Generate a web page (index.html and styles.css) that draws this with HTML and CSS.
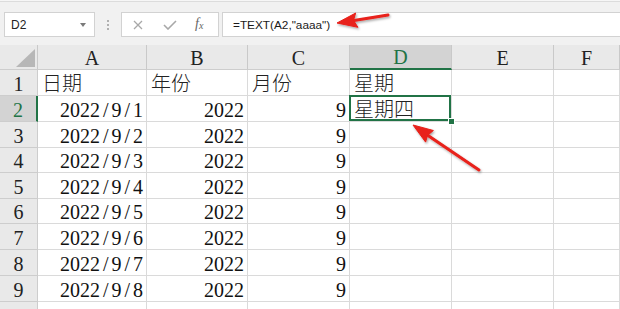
FILE: index.html
```html
<!DOCTYPE html>
<html>
<head>
<meta charset="utf-8">
<link rel="stylesheet" href="styles.css">
</head>
<body>
<div class="page">
  <div class="toolbar">
    <div class="namebox"><span class="nb-text">D2</span><span class="caret"></span></div>
    <div class="sep"><span></span><span></span><span></span></div>
    <div class="fbox">
      <svg class="ic ic-x" width="10" height="10" viewBox="0 0 10 10"><path d="M1 1 L9 9 M9 1 L1 9" stroke="#a8a8a8" stroke-width="1.3" fill="none"/></svg>
      <svg class="ic ic-ok" width="14" height="10" viewBox="0 0 14 10"><path d="M1 5 L5 9 L13 1" stroke="#a8a8a8" stroke-width="1.6" fill="none"/></svg>
      <span class="fx">f<sub>x</sub></span>
    </div>
    <div class="formula">=TEXT(A2,"aaaa")</div>
  </div>
  <div class="sheet">
    <div class="ch corner"><span class="tri"></span></div>
    <div class="ch">A</div><div class="ch">B</div><div class="ch">C</div><div class="ch active-c">D</div><div class="ch">E</div><div class="ch">F</div>

    <div class="rh">1</div>
    <div class="c l">日期</div><div class="c l">年份</div><div class="c l">月份</div><div class="c l">星期</div><div class="c"></div><div class="c"></div>

    <div class="rh active-r">2</div>
    <div class="c r">2022<span class="sl">/</span>9<span class="sl">/</span>1</div><div class="c r">2022</div><div class="c r">9</div><div class="c l sel">星期四<span class="handle"></span></div><div class="c"></div><div class="c"></div>

    <div class="rh">3</div>
    <div class="c r">2022<span class="sl">/</span>9<span class="sl">/</span>2</div><div class="c r">2022</div><div class="c r">9</div><div class="c"></div><div class="c"></div><div class="c"></div>

    <div class="rh">4</div>
    <div class="c r">2022<span class="sl">/</span>9<span class="sl">/</span>3</div><div class="c r">2022</div><div class="c r">9</div><div class="c"></div><div class="c"></div><div class="c"></div>

    <div class="rh">5</div>
    <div class="c r">2022<span class="sl">/</span>9<span class="sl">/</span>4</div><div class="c r">2022</div><div class="c r">9</div><div class="c"></div><div class="c"></div><div class="c"></div>

    <div class="rh">6</div>
    <div class="c r">2022<span class="sl">/</span>9<span class="sl">/</span>5</div><div class="c r">2022</div><div class="c r">9</div><div class="c"></div><div class="c"></div><div class="c"></div>

    <div class="rh">7</div>
    <div class="c r">2022<span class="sl">/</span>9<span class="sl">/</span>6</div><div class="c r">2022</div><div class="c r">9</div><div class="c"></div><div class="c"></div><div class="c"></div>

    <div class="rh">8</div>
    <div class="c r">2022<span class="sl">/</span>9<span class="sl">/</span>7</div><div class="c r">2022</div><div class="c r">9</div><div class="c"></div><div class="c"></div><div class="c"></div>

    <div class="rh">9</div>
    <div class="c r">2022<span class="sl">/</span>9<span class="sl">/</span>8</div><div class="c r">2022</div><div class="c r">9</div><div class="c"></div><div class="c"></div><div class="c"></div>

    <div class="rh">10</div>
    <div class="c r">2022<span class="sl">/</span>9<span class="sl">/</span>9</div><div class="c r">2022</div><div class="c r">9</div><div class="c"></div><div class="c"></div><div class="c"></div>
  </div>
  <svg class="arrows" width="620" height="309" viewBox="0 0 620 309">
    <defs>
      <filter id="sh" x="-20%" y="-20%" width="140%" height="140%">
        <feDropShadow dx="1" dy="1.5" stdDeviation="1" flood-color="#000" flood-opacity="0.35"/>
      </filter>
    </defs>
    <g filter="url(#sh)" fill="#e8201a" stroke="#e8201a">
      <line x1="388" y1="15" x2="354" y2="20.4" stroke-width="3" stroke-linecap="round"/>
      <polygon points="337,23 355.7,13 353.5,20.3 357.9,27.3" stroke-width="1" stroke-linejoin="round"/>
      <line x1="479" y1="170" x2="428" y2="135.5" stroke-width="3" stroke-linecap="round"/>
      <polygon points="413,125 433.4,130.5 427.5,135.5 425.6,142.1" stroke-width="1" stroke-linejoin="round"/>
    </g>
  </svg>
</div>
</body>
</html>
```

FILE: styles.css
```css
* { box-sizing: border-box; }
html, body { margin: 0; padding: 0; }
body {
  width: 620px;
  height: 309px;
  overflow: hidden;
  background: #f1f1f1;
}
.page {
  position: relative;
  width: 620px;
  height: 309px;
  overflow: hidden;
}
.toolbar {
  height: 45px;
  display: flex;
  align-items: flex-start;
  padding: 11px 0 0 4px;
  border-top: 1px solid #f6f6f6;
  background: #f1f1f1;
  box-shadow: inset 0 2px 0 -1px #dcdcdc;
}
.namebox {
  width: 91px;
  height: 25px;
  background: #fff;
  border: 1px solid #d2d2d2;
  display: flex;
  align-items: center;
  justify-content: space-between;
  padding: 1px 6px 0 6px;
  font-family: "Liberation Sans", Arial, sans-serif;
  font-size: 12px;
  color: #222;
}
.caret {
  width: 0;
  height: 0;
  border-left: 3.5px solid transparent;
  border-right: 3.5px solid transparent;
  border-top: 4px solid #7a7a7a;
  margin-right: 2px;
}
.sep {
  width: 26px;
  height: 25px;
  display: flex;
  flex-direction: column;
  align-items: center;
  justify-content: center;
  gap: 2px;
}
.sep span {
  width: 2px;
  height: 2px;
  background: #b0b0b0;
}
.fbox {
  width: 98px;
  height: 25px;
  background: #fff;
  border: 1px solid #d2d2d2;
  position: relative;
  display: flex;
  align-items: center;
  padding-left: 11px;
}
.ic-x { margin-right: 20px; }
.ic-ok { margin-right: 18px; }
.fx {
  font-family: "Liberation Serif", "Times New Roman", serif;
  font-style: italic;
  font-size: 14px;
  color: #666;
  line-height: 1;
  margin-top: -1px;
}
.fx sub {
  font-size: 10px;
  vertical-align: -1px;
}
.formula {
  flex: 1;
  height: 25px;
  margin-left: 3px;
  margin-right: -2px;
  background: #fff;
  border: 1px solid #d2d2d2;
  font-family: "Liberation Sans", Arial, sans-serif;
  font-size: 11.8px;
  line-height: 23px;
  padding: 1px 0 0 10px;
  color: #1a1a1a;
}
.sheet {
  display: grid;
  grid-template-columns: 38px 109px 101px 102px 102px 102px 1fr;
  grid-template-rows: 25px 26px 26px 26px 25px 26px 25px 26px 26px 26px 26px;
  background: #fff;
  font-family: "Liberation Serif", "Times New Roman", "Noto Sans CJK SC", serif;
  font-size: 20px;
  color: #111;
}
.c, .ch, .rh {
  display: flex;
  align-items: flex-end;
  line-height: 22px;
  white-space: nowrap;
  overflow: visible;
}
.c {
  border-right: 1px solid #dadada;
  border-bottom: 1px solid #dadada;
  position: relative;
}
.c.l {
  justify-content: flex-start;
  padding-left: 4px;
  font-family: "Liberation Serif", "Noto Sans CJK SC", serif;
  font-weight: 300;
  color: #222;
}
.c.r { justify-content: flex-end; padding-right: 3px; }
.sl { margin: 0 3px; }
.ch, .rh {
  background: #e9e9e9;
  justify-content: center;
  color: #222;
  border-right: 1px solid #cdcdcd;
  border-bottom: 1px solid #cdcdcd;
}
.ch { border-right-color: #c9c9c9; }
.corner {
  position: relative;
  border-right-color: #c9c9c9;
}
.tri {
  position: absolute;
  right: 2px;
  bottom: 2px;
  width: 0;
  height: 0;
  border-left: 19px solid transparent;
  border-bottom: 18px solid #b7b7b7;
}
.active-c {
  background: #d3d3d3;
  color: #217346;
  border-bottom: 2px solid #217346;
}
.active-r {
  background: #d3d3d3;
  color: #217346;
  border-right: 2px solid #217346;
}
.sel::after {
  content: "";
  position: absolute;
  left: -1px;
  top: -1px;
  right: 0;
  bottom: 0;
  border: 2px solid #217346;
  pointer-events: none;
}
.handle {
  position: absolute;
  right: -4px;
  bottom: -4px;
  width: 7px;
  height: 7px;
  background: #217346;
  border: 1px solid #fff;
  z-index: 2;
}
.arrows {
  position: absolute;
  left: 0;
  top: 0;
  pointer-events: none;
}
```
